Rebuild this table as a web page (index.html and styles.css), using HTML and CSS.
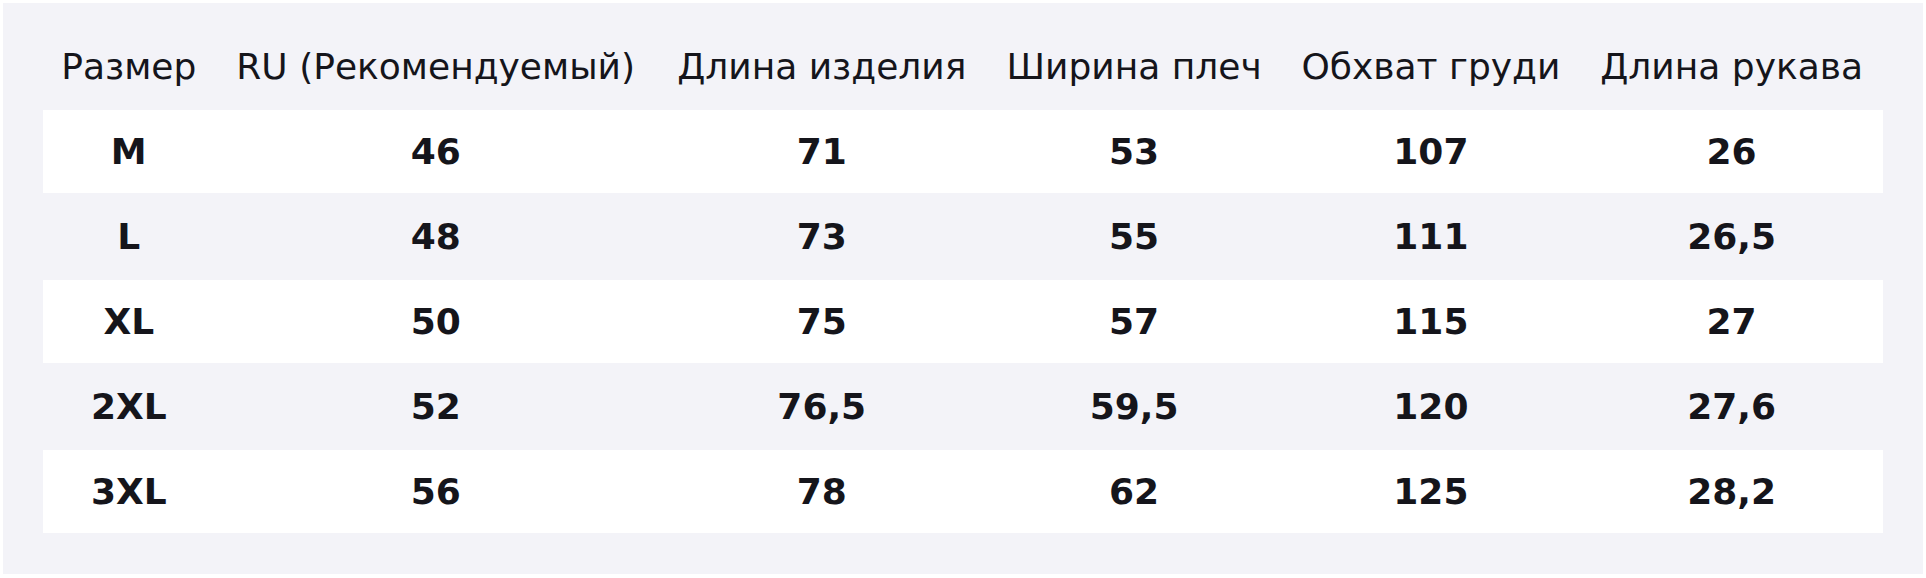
FILE: index.html
```html
<!DOCTYPE html>
<html lang="ru">
<head>
<meta charset="utf-8">
<title>Таблица размеров</title>
<link rel="stylesheet" href="styles.css">
</head>
<body>
<div class="panel">
  <table class="sizes">
    <thead>
      <tr>
        <th>Размер</th>
        <th>RU (Рекомендуемый)</th>
        <th>Длина изделия</th>
        <th>Ширина плеч</th>
        <th>Обхват груди</th>
        <th>Длина рукава</th>
      </tr>
    </thead>
    <tbody>
      <tr class="light"><td>M</td><td>46</td><td>71</td><td>53</td><td>107</td><td>26</td></tr>
      <tr><td>L</td><td>48</td><td>73</td><td>55</td><td>111</td><td>26,5</td></tr>
      <tr class="light"><td>XL</td><td>50</td><td>75</td><td>57</td><td>115</td><td>27</td></tr>
      <tr><td>2XL</td><td>52</td><td>76,5</td><td>59,5</td><td>120</td><td>27,6</td></tr>
      <tr class="light"><td>3XL</td><td>56</td><td>78</td><td>62</td><td>125</td><td>28,2</td></tr>
    </tbody>
  </table>
</div>
</body>
</html>
```

FILE: styles.css
```css
html, body {
  background: #ffffff;
}
body {
  margin: 3px;
  font-family: "DejaVu Sans", "Noto Sans", sans-serif;
  color: #15151b;
}
.panel {
  background: #f3f3f8;
  padding: 20px 40px 39px;
}
.sizes {
  width: 100%;
  border-collapse: separate;
  border-spacing: 0 2px;
}
.sizes th,
.sizes td {
  font-size: 36px;
  line-height: 43px;
  padding: 20px 16px;
  text-align: center;
  white-space: nowrap;
}
.sizes th {
  font-weight: normal;
}
.sizes td {
  font-weight: bold;
}
.sizes tr.light td {
  background: #ffffff;
}
```
